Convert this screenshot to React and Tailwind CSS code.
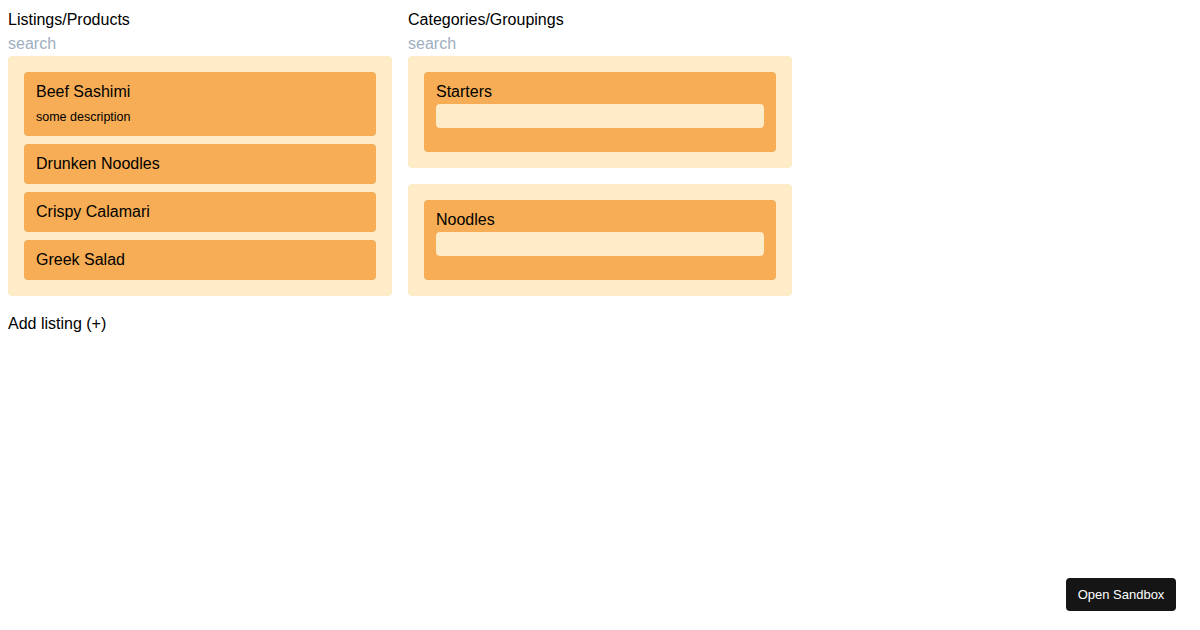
import React from 'react';

const listings = [
  { id: 1, name: 'Beef Sashimi', description: 'some description' },
  { id: 2, name: 'Drunken Noodles' },
  { id: 3, name: 'Crispy Calamari' },
  { id: 4, name: 'Greek Salad' },
];

const categories = [
  { id: 'c1', name: 'Starters' },
  { id: 'c2', name: 'Noodles' },
];

function App() {
  return (
    <div className="min-h-[630px] bg-white p-2 text-black font-['Liberation_Sans',Arial,sans-serif] text-base">
      <div className="flex gap-4">
        <div className="w-[384px]">
          <h2 className="leading-6">Listings/Products</h2>
          <input
            className="block w-full h-6 bg-transparent outline-none placeholder:text-[#a0aec0]"
            placeholder="search"
          />
          <div className="bg-[#feebc8] rounded p-4 flex flex-col gap-2">
            {listings.map((item) => (
              <div key={item.id} className="bg-[#f6ad55] rounded px-3 py-2">
                <div className="leading-6">{item.name}</div>
                {item.description && (
                  <p className="text-[12.5px] leading-4 mt-[5px] mb-[3px]">{item.description}</p>
                )}
              </div>
            ))}
          </div>
          <div className="mt-4 leading-6">Add listing (+)</div>
        </div>

        <div className="w-[384px]">
          <h2 className="leading-6">Categories/Groupings</h2>
          <input
            className="block w-full h-6 bg-transparent outline-none placeholder:text-[#a0aec0]"
            placeholder="search"
          />
          <div className="flex flex-col gap-4">
            {categories.map((cat) => (
              <div key={cat.id} className="bg-[#feebc8] rounded p-4">
                <div className="bg-[#f6ad55] rounded px-3 pt-2 pb-6">
                  <div className="leading-6">{cat.name}</div>
                  <div className="h-6 bg-[#feebc8] rounded" />
                </div>
              </div>
            ))}
          </div>
        </div>
      </div>

      <button className="fixed right-6 bottom-[19px] h-[33px] w-[110px] rounded bg-[#151515] text-white text-[13px] font-['Liberation_Sans',Arial,sans-serif]">
        Open Sandbox
      </button>
    </div>
  );
}

export default App;
